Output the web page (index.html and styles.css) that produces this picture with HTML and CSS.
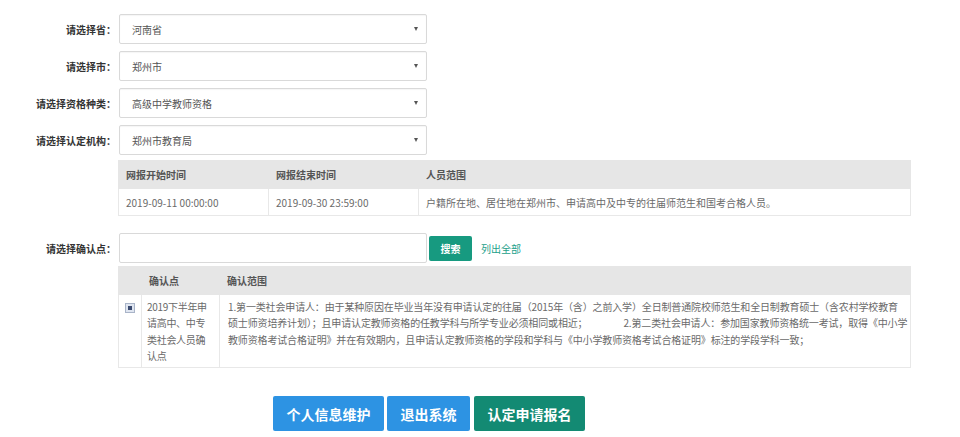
FILE: index.html
```html
<!DOCTYPE html>
<html lang="zh">
<head>
<meta charset="utf-8">
<link rel="stylesheet" href="styles.css">
</head>
<body>
<div class="page">
  <div class="form-row">
    <label class="lbl">请选择省：</label>
    <div class="select"><span>河南省</span><i class="caret"></i></div>
  </div>
  <div class="form-row">
    <label class="lbl">请选择市：</label>
    <div class="select"><span>郑州市</span><i class="caret"></i></div>
  </div>
  <div class="form-row">
    <label class="lbl">请选择资格种类：</label>
    <div class="select"><span>高级中学教师资格</span><i class="caret"></i></div>
  </div>
  <div class="form-row">
    <label class="lbl">请选择认定机构：</label>
    <div class="select"><span>郑州市教育局</span><i class="caret"></i></div>
  </div>

  <table class="grid t1">
    <colgroup><col class="c1"><col class="c2"><col></colgroup>
    <thead><tr><th>网报开始时间</th><th>网报结束时间</th><th>人员范围</th></tr></thead>
    <tbody><tr><td>2019-09-11 00:00:00</td><td>2019-09-30 23:59:00</td><td>户籍所在地、居住地在郑州市、申请高中及中专的往届师范生和国考合格人员。</td></tr></tbody>
  </table>

  <div class="search-row">
    <label class="lbl">请选择确认点：</label>
    <div class="input"></div>
    <button class="btn-search">搜索</button>
    <a class="link">列出全部</a>
  </div>

  <table class="grid t2">
    <colgroup><col class="k1"><col class="k2"><col></colgroup>
    <thead><tr><th></th><th>确认点</th><th>确认范围</th></tr></thead>
    <tbody><tr>
      <td class="chk"><span class="box"></span></td>
      <td class="name">2019下半年申<br>请高中、中专<br>类社会人员确<br>认点</td>
      <td class="scope">1.第一类社会申请人：由于某种原因在毕业当年没有申请认定的往届（2015年（含）之前入学）全日制普通院校师范生和全日制教育硕士（含农村学校教育<br>硕士师资培养计划）；且申请认定教师资格的任教学科与所学专业必须相同或相近；<span class="gap"></span>2.第二类社会申请人：参加国家教师资格统一考试，取得《中小学<br>教师资格考试合格证明》并在有效期内，且申请认定教师资格的学段和学科与《中小学教师资格考试合格证明》标注的学段学科一致；</td>
    </tr></tbody>
  </table>

  <div class="actions">
    <button class="btn blue w1">个人信息维护</button>
    <button class="btn blue w2">退出系统</button>
    <button class="btn teal w1">认定申请报名</button>
  </div>
</div>
</body>
</html>
```

FILE: styles.css
```css
* { box-sizing: border-box; }
html, body { margin: 0; padding: 0; background: #fff; }
body {
  font-family: "Noto Sans CJK SC", "Noto Sans", sans-serif;
  font-size: 10px;
  color: #666;
}
.page {
  width: 960px;
  height: 437px;
  padding-top: 14px;
  overflow: hidden;
}
.form-row {
  display: flex;
  align-items: center;
  height: 30px;
  margin-bottom: 7px;
}
.lbl {
  width: 119px;
  flex: none;
  text-align: right;
  padding-right: 3px;
  font-weight: bold;
  color: #333;
  font-size: 10px;
}
.select {
  width: 308px;
  height: 30px;
  border: 1px solid #d9d9d9;
  border-radius: 2px;
  display: flex;
  align-items: center;
  justify-content: space-between;
  padding: 0 8px 0 12px;
  color: #555;
  box-shadow: inset 0 1px 1px rgba(0,0,0,0.04);
}
.caret {
  width: 0; height: 0;
  border-left: 2.5px solid transparent;
  border-right: 2.5px solid transparent;
  border-top: 4px solid #555;
}
.grid {
  border-collapse: collapse;
  margin-left: 118px;
  width: 793px;
  table-layout: fixed;
}
.grid th {
  background: #e6e6e6;
  text-align: left;
  font-weight: bold;
  color: #555;
  height: 28px;
  padding: 0 7px;
  border: 1px solid #e6e6e6;
}
.grid td {
  border: 1px solid #e8e8e8;
  padding: 0 7px;
  color: #6a6a6a;
  vertical-align: middle;
  white-space: nowrap;
  overflow: hidden;
}
.t1 { margin-top: -2px; }
.t1 .c1 { width: 150px; }
.t1 .c2 { width: 150px; }
.t1 td { height: 27px; }
.search-row {
  display: flex;
  align-items: center;
  margin-top: 17px;
  height: 30px;
}
.input {
  width: 308px;
  height: 30px;
  border: 1px solid #d9d9d9;
  border-radius: 2px;
}
.btn-search {
  margin-left: 2px;
  width: 43px;
  height: 25px;
  border: none;
  border-radius: 2px;
  background: #179a80;
  color: #fff;
  font-family: inherit;
  font-size: 10px;
  font-weight: bold;
  padding: 0;
}
.link {
  margin-left: 9px;
  color: #23a08a;
  font-size: 10px;
}
.t2 { margin-top: 3px; }
.t2 .k1 { width: 23px; }
.t2 .k2 { width: 78px; }
.t2 th { height: 28px; }
.t2 td {
  vertical-align: top;
  line-height: 16.3px;
  padding-top: 4px;
  padding-bottom: 3px;
}
.t2 td.name { padding: 4px 2px 3px 5px; letter-spacing: -0.3px; }
.t2 td.chk { padding: 8px 0 0 6px; }
.box {
  display: block;
  width: 10px;
  height: 10px;
  border: 1px solid #a9b4c8;
  background: #dfe5f0;
  position: relative;
}
.box::after {
  content: "";
  position: absolute;
  left: 2px; top: 2px;
  width: 4px; height: 4px;
  background: #3a4a70;
}
.t2 td.scope { padding: 4px 4px 3px 8px; letter-spacing: -0.15px; }
.gap { display: inline-block; width: 36px; }
.actions {
  display: flex;
  margin-top: 28px;
  margin-left: 273px;
}
.btn {
  height: 35px;
  border: none;
  border-radius: 2px;
  color: #fff;
  font-family: inherit;
  font-size: 14px;
  font-weight: bold;
  padding: 0;
  margin-right: 3px;
}
.btn.w1 { width: 111px; }
.btn.w2 { width: 83px; margin-right: 4px; }
.blue { background: #2d93e3; }
.teal { background: #138a73; }
```
